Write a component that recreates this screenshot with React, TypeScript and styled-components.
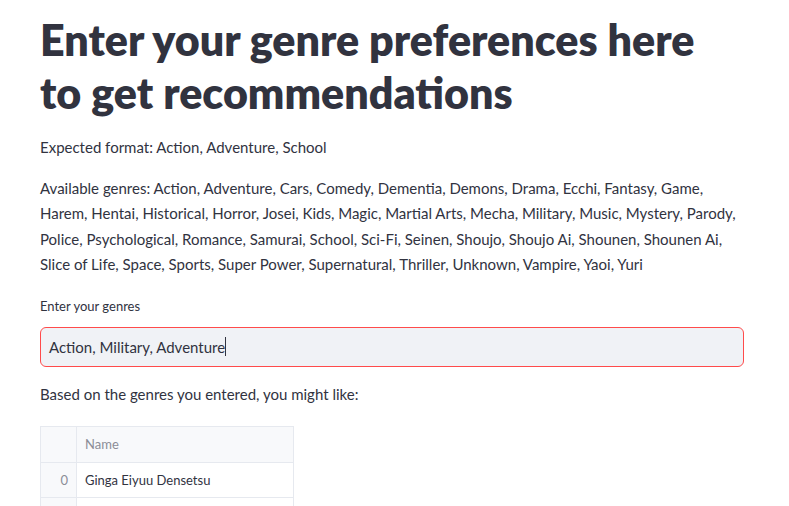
import React from "react";
import styled, { createGlobalStyle } from "styled-components";

const Global = createGlobalStyle`
  html, body { margin: 0; padding: 0; background: #ffffff; }
  body { font-family: Lato, "Noto Sans", sans-serif; color: #31333f; }
  * { box-sizing: border-box; }
`;

const Main = styled.main`
  width: 704px;
  margin: 0 0 0 40px;
  padding-top: 14px;
  display: flex;
  flex-direction: column;
`;

const Title = styled.h1`
  margin: 0;
  font-family: Lato, sans-serif;
  font-weight: 800;
  font-size: 43px;
  line-height: 52.5px;
  color: #31333f;
`;

const Para = styled.p<{ $top: number }>`
  margin: ${(p) => p.$top}px 0 0 0;
  font-size: 15px;
  line-height: 25.6px;
  color: #31333f;
`;

const Label = styled.label`
  margin-top: 18px;
  font-size: 13px;
  line-height: 20px;
  color: #31333f;
`;

const InputBox = styled.div`
  margin-top: 11px;
  height: 40px;
  border: 1px solid #ff4b4b;
  border-radius: 6px;
  background: #f0f2f6;
  display: flex;
  align-items: center;
  padding: 0 8px;
  font-size: 15px;
  color: #31333f;
`;

const Caret = styled.span`
  display: inline-block;
  width: 1px;
  height: 19px;
  background: #31333f;
`;

const Table = styled.div`
  margin-top: 18px;
  width: 254px;
  border: 1px solid #e6e9ef;
  border-bottom: none;
  display: grid;
  grid-template-columns: 36px 1fr;
  font-size: 13px;
`;

const Cell = styled.div<{ $head?: boolean; $index?: boolean }>`
  height: ${(p) => (p.$head ? 36 : 35)}px;
  display: flex;
  align-items: center;
  justify-content: ${(p) => (p.$index ? "flex-end" : "flex-start")};
  padding: 0 8px;
  background: ${(p) => (p.$head || p.$index ? "#f8f9fb" : "#ffffff")};
  color: ${(p) => (p.$head || p.$index ? "#8b8d97" : "#31333f")};
  border-bottom: 1px solid #e6e9ef;
  border-right: ${(p) => (p.$index ? "1px solid #e6e9ef" : "none")};
`;

const genres =
  "Available genres: Action, Adventure, Cars, Comedy, Dementia, Demons, Drama, Ecchi, Fantasy, Game, Harem, Hentai, Historical, Horror, Josei, Kids, Magic, Martial Arts, Mecha, Military, Music, Mystery, Parody, Police, Psychological, Romance, Samurai, School, Sci-Fi, Seinen, Shoujo, Shoujo Ai, Shounen, Shounen Ai, Slice of Life, Space, Sports, Super Power, Supernatural, Thriller, Unknown, Vampire, Yaoi, Yuri";

export default function App() {
  return (
    <>
      <Global />
      <Main>
        <Title>
          Enter your genre preferences here
          <br />
          to get recommendations
        </Title>
        <Para $top={16}>Expected format: Action, Adventure, School</Para>
        <Para $top={15}>{genres}</Para>
        <Label>Enter your genres</Label>
        <InputBox>
          Action, Military, Adventure
          <Caret />
        </InputBox>
        <Para $top={15}>Based on the genres you entered, you might like:</Para>
        <Table>
          <Cell $head $index />
          <Cell $head>Name</Cell>
          <Cell $index>0</Cell>
          <Cell>Ginga Eiyuu Densetsu</Cell>
          <Cell $index />
          <Cell />
        </Table>
      </Main>
    </>
  );
}
